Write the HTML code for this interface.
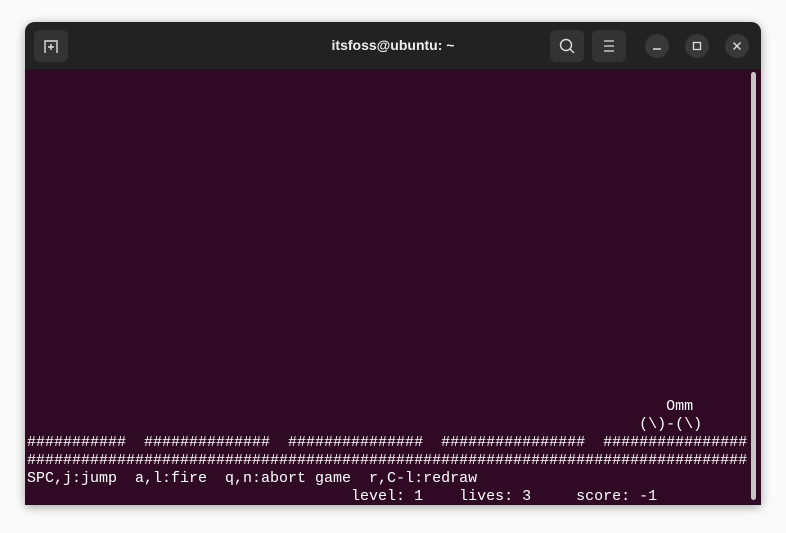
<!DOCTYPE html>
<html><head><style>
body{margin:0;width:786px;height:533px;background:#fafafa;position:relative;overflow:hidden;font-family:"Liberation Sans",sans-serif}
.win{position:absolute;left:25px;top:22px;width:736px;height:483px;border-radius:10px 10px 0 0;overflow:hidden;box-shadow:0 2px 10px rgba(0,0,0,.35);background:#300a24}
.hdr{position:absolute;left:0;top:0;width:736px;height:47px;background:#222;border-bottom:1px solid #181818}
.btn{position:absolute;top:8px;width:34px;height:32px;border-radius:6px;background:#333}
.cir{position:absolute;top:12px;width:24px;height:24px;border-radius:50%;background:#383838}
.title{position:absolute;left:0;width:736px;top:15px;text-align:center;color:#eee;font-weight:bold;font-size:14px}
.term{position:absolute;left:2px;top:376px;font-family:"Liberation Mono",monospace;font-size:15px;line-height:18px;color:#fff;white-space:pre;letter-spacing:0}
.sb{position:absolute;left:726px;top:50px;width:5px;height:428px;border-radius:3px;background:#c8c4c6}
</style></head><body>
<div class="win">
<div class="hdr">
<div class="btn" style="left:9px"><svg width="34" height="32"><path d="M11 23V11h12v12M14 17h6M17 14v6" stroke="#ddd" stroke-width="1.4" fill="none"/></svg></div>
<div class="title">itsfoss@ubuntu: ~</div>
<div class="btn" style="left:525px"><svg width="34" height="32"><circle cx="16" cy="15" r="5.5" stroke="#ddd" stroke-width="1.4" fill="none"/><path d="M20 19l4 4" stroke="#ddd" stroke-width="1.4"/></svg></div>
<div class="btn" style="left:567px"><svg width="34" height="32"><path d="M12 11h10M12 16h10M12 21h10" stroke="#ddd" stroke-width="1.3"/></svg></div>
<div class="cir" style="left:620px"><svg width="24" height="24"><path d="M8 15h8" stroke="#ddd" stroke-width="1.4"/></svg></div>
<div class="cir" style="left:660px"><svg width="24" height="24"><rect x="8.5" y="8.5" width="7" height="7" stroke="#ddd" stroke-width="1.3" fill="none"/></svg></div>
<div class="cir" style="left:700px"><svg width="24" height="24"><path d="M8.5 8.5l7 7M15.5 8.5l-7 7" stroke="#ddd" stroke-width="1.4"/></svg></div>
</div>
<div class="term">                                                                       Omm
                                                                    (\)-(\)
###########  ##############  ###############  ################  ################
################################################################################
SPC,j:jump  a,l:fire  q,n:abort game  r,C-l:redraw
                                    level: 1    lives: 3     score: -1</div>
<div class="sb"></div>
</div>
</body></html>
